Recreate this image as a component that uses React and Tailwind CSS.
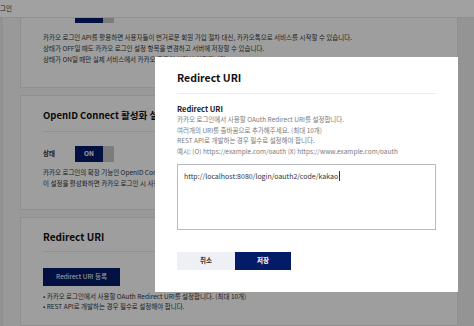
import React from 'react';

const Toggle = () => (
  <div className="flex h-[16px]">
    <div className="w-[28px] bg-[#041b68] text-white text-[6.5px] font-bold flex items-center justify-center">ON</div>
    <div className="w-[11px] bg-[#c4c4c4]" />
  </div>
);

const App = () => {
  return (
    <div className="relative h-[326px] w-[474px] overflow-hidden bg-[#f3f3f3] font-['Noto_Sans_CJK_KR','Noto_Sans',sans-serif] text-[#222]">
      <div className="h-[18px] bg-white border-b border-[#e4e4e4] flex items-center text-[6.5px] text-[#333]">그인</div>

      <div className="flex h-[308px]">
        <div className="w-[3px] bg-[#e6e6e6]" />
        <div className="flex-1 pl-[17px] flex flex-col gap-[7px] overflow-hidden">
          {/* card 1, scrolled up under the header */}
          <div className="bg-[#fafafa] border-x border-b border-[#e3e3e3] pl-[22px] pb-[22px] text-[6.5px] leading-[11px] text-[#333]">
            <div className="flex">
              <div className="w-[32px]" />
              <div className="flex h-[5px]">
                <div className="w-[28px] bg-[#041b68]" />
                <div className="w-[11px] bg-[#c4c4c4]" />
              </div>
            </div>
            <div className="mt-[9px] whitespace-nowrap">
              <p>카카오 로그인 API를 활용하면 사용자들이 번거로운 회원 가입 절차 대신, 카카오톡으로 서비스를 시작할 수 있습니다.</p>
              <p>상태가 OFF일 때도 카카오 로그인 설정 항목을 변경하고 서버에 저장할 수 있습니다.</p>
              <p>상태가 ON일 때만 실제 서비스에서 카카오 로그인 화면이 연결됩니다.</p>
            </div>
          </div>

          {/* card 2 */}
          <div className="bg-[#fafafa] border border-[#e3e3e3] pl-[22px] pt-[12px] pb-[21px]">
            <div className="pb-[9px] border-b border-[#e6e6e6] text-[9.5px] font-semibold leading-[14px] text-[#111] whitespace-nowrap">OpenID Connect 활성화 설정</div>
            <div className="mt-[14px] flex items-center">
              <div className="w-[32px] text-[6.5px] font-bold text-[#333]">상태</div>
              <Toggle />
            </div>
            <div className="mt-[5px] text-[6.5px] leading-[10.5px] text-[#333] whitespace-nowrap">
              <p>카카오 로그인의 확장 기능인 OpenID Connect를 활성화합니다.</p>
              <p>이 설정을 활성화하면 카카오 로그인 시 사용자 인증 정보를 담은 ID 토큰을 함께 발급받을 수 있습니다.</p>
            </div>
          </div>

          {/* card 3 */}
          <div className="flex-1 bg-[#fafafa] border border-[#e3e3e3] pl-[22px] pt-[12px]">
            <div className="pb-[7px] border-b border-[#e6e6e6] text-[10px] font-semibold leading-[14px] text-[#111]">Redirect URI</div>
            <button className="mt-[16px] w-[77px] h-[18px] bg-[#041b68] text-white text-[6.5px] flex items-center justify-center">Redirect URI 등록</button>
            <ul className="mt-[5px] text-[6.5px] leading-[10px] text-[#333] whitespace-nowrap">
              <li>• 카카오 로그인에서 사용할 OAuth Redirect URI를 설정합니다. (최대 10개)</li>
              <li>• REST API로 개발하는 경우 필수로 설정해야 합니다.</li>
            </ul>
          </div>
        </div>
        <div className="w-[16px] bg-[#ebebeb]" />
      </div>

      {/* dim layer */}
      <div className="absolute inset-0 bg-black/[0.37]" />

      {/* modal */}
      <div className="absolute left-[155px] top-[57px] w-[303px] bg-white pt-[14px] px-[22px] pb-[22px]">
        <h2 className="pb-[8px] border-b border-[#ececec] text-[10.5px] font-semibold leading-[14px] text-[#111]">Redirect URI</h2>
        <h3 className="mt-[10px] text-[7.5px] font-semibold leading-[10px] text-[#222]">Redirect URI</h3>
        <div className="text-[6.5px] leading-[10.7px] text-[#7a7a7a] whitespace-nowrap">
          <p>카카오 로그인에서 사용할 OAuth Redirect URI를 설정합니다.</p>
          <p>여러개의 URI를 줄바꿈으로 추가해주세요. (최대 10개)</p>
          <p>REST API로 개발하는 경우 필수로 설정해야 합니다.</p>
          <p>예시: (O) https://example.com/oauth (X) https://www.example.com/oauth</p>
        </div>
        <div className="mt-[7px] h-[66px] border border-[#b8bbc6] px-[6px] pt-[6px] text-[7px] leading-[10px] text-[#333]">
          <span className="border-r border-[#333] pr-px">http://localhost:8080/login/oauth2/code/kakao</span>
        </div>
        <div className="mt-[22px] flex">
          <button className="w-[58px] h-[18px] bg-[#eef0f5] text-[6.5px] font-semibold text-[#333]">취소</button>
          <button className="w-[56px] h-[18px] bg-[#041b68] text-[6.5px] font-semibold text-white">저장</button>
        </div>
      </div>
    </div>
  );
};

export default App;
